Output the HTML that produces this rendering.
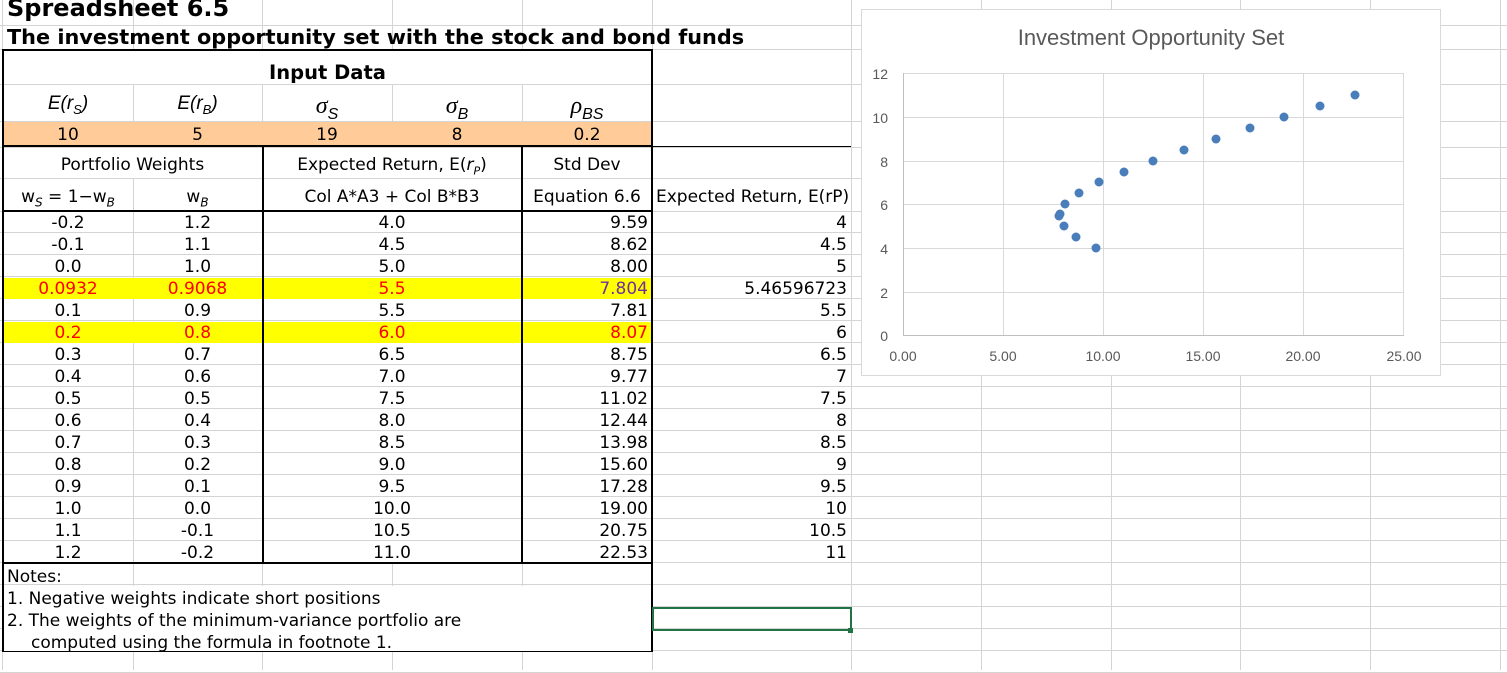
<!DOCTYPE html>
<html><head><meta charset="utf-8">
<style>
*{margin:0;padding:0;box-sizing:border-box}
body{width:1507px;height:670px;overflow:hidden;background:#fff;position:relative;font-family:"DejaVu Sans","Liberation Sans",sans-serif;font-size:17px;color:#000}
.v{position:absolute;width:1px;background:#d4d4d4}
.h{position:absolute;left:0;width:1507px;height:1px;background:#d4d4d4}
.c{position:absolute;white-space:nowrap;text-align:center;height:22px;line-height:22px}
.r{text-align:right}
.l{text-align:left}
.bk{position:absolute;background:#000}
.red{color:#f00}
</style></head><body>
<!-- grid -->
<div class="v" style="left:2px;top:0;height:670px"></div><div class="v" style="left:133px;top:0;height:670px"></div><div class="v" style="left:262px;top:0;height:670px"></div>
<div class="v" style="left:392px;top:0;height:147px"></div><div class="v" style="left:392px;top:563px;height:107px"></div>
<div class="v" style="left:522px;top:0;height:670px"></div><div class="v" style="left:652px;top:0;height:670px"></div><div class="v" style="left:851px;top:0;height:670px"></div><div class="v" style="left:981px;top:0;height:670px"></div><div class="v" style="left:1111px;top:0;height:670px"></div><div class="v" style="left:1240px;top:0;height:670px"></div><div class="v" style="left:1370px;top:0;height:670px"></div><div class="v" style="left:1500px;top:0;height:670px"></div>
<div class="h" style="top:25px"></div><div class="h" style="top:49px"></div><div class="h" style="top:84px"></div><div class="h" style="top:121px"></div><div class="h" style="top:147px"></div><div class="h" style="top:178px"></div><div class="h" style="top:211px"></div>
<div style="position:absolute;left:0;top:211px;width:1507px;height:462px;background:repeating-linear-gradient(to bottom,transparent 0,transparent 21px,#d4d4d4 21px,#d4d4d4 22px)"></div>

<!-- fills -->
<div style="position:absolute;left:3px;top:122px;width:649px;height:25px;background:#ffcc99"></div>
<div style="position:absolute;left:3px;top:278px;width:649px;height:21px;background:#ffff00"></div>
<div style="position:absolute;left:3px;top:322px;width:649px;height:21px;background:#ffff00"></div>

<div style="position:absolute;left:3px;top:50px;width:649px;height:34px;background:#fff"></div>
<div style="position:absolute;left:3px;top:148px;width:259px;height:30px;background:#fff"></div>
<div style="position:absolute;left:263px;top:148px;width:259px;height:30px;background:#fff"></div>
<div style="position:absolute;left:263px;top:179px;width:259px;height:32px;background:#fff"></div>

<!-- black borders -->
<div class="bk" style="left:2px;top:49px;width:651px;height:2px"></div>
<div class="bk" style="left:2px;top:49px;width:2px;height:603px"></div>
<div class="bk" style="left:651px;top:49px;width:2px;height:603px"></div>
<div class="bk" style="left:2px;top:145px;width:651px;height:2px"></div>
<div class="bk" style="left:652px;top:146px;width:199px;height:1px"></div>
<div class="bk" style="left:2px;top:210px;width:651px;height:2px"></div>
<div class="bk" style="left:2px;top:562px;width:651px;height:2px"></div>
<div class="bk" style="left:2px;top:651px;width:651px;height:1px"></div>
<div class="bk" style="left:262px;top:146px;width:2px;height:417px"></div>
<div class="bk" style="left:521px;top:146px;width:2px;height:417px"></div>

<!-- titles -->
<div class="c l" style="left:7px;top:-6px;height:28px;line-height:28px;font-size:24px;font-weight:bold">Spreadsheet 6.5</div>
<div class="c l" style="left:7px;top:25px;height:24px;line-height:24px;font-size:20.8px;font-weight:bold">The investment opportunity set with the stock and bond funds</div>
<div class="c" style="left:3px;width:649px;top:62px;font-size:19.5px;font-weight:bold;">Input Data</div>
<div class="c" style="left:3px;width:130px;top:93px;font-style:italic;font-family:'Liberation Sans',sans-serif;font-size:19px">E(r<sub style="font-size:13px">S</sub>)</div>
<div class="c" style="left:133px;width:129px;top:93px;font-style:italic;font-family:'Liberation Sans',sans-serif;font-size:19px">E(r<sub style="font-size:13px">B</sub>)</div>
<div class="c" style="left:262px;width:130px;top:95px;font-style:italic;font-family:'Liberation Serif',serif;font-size:24px">σ<sub style="font-size:16px;font-family:'Liberation Sans'">S</sub></div>
<div class="c" style="left:392px;width:130px;top:95px;font-style:italic;font-family:'Liberation Serif',serif;font-size:24px">σ<sub style="font-size:16px;font-family:'Liberation Sans'">B</sub></div>
<div class="c" style="left:522px;width:130px;top:95px;font-style:italic;font-family:'Liberation Serif',serif;font-size:24px">ρ<sub style="font-size:16px;font-family:'Liberation Sans'">BS</sub></div>
<div class="c" style="left:3px;width:130px;top:124px">10</div>
<div class="c" style="left:133px;width:129px;top:124px">5</div>
<div class="c" style="left:262px;width:130px;top:124px">19</div>
<div class="c" style="left:392px;width:130px;top:124px">8</div>
<div class="c" style="left:522px;width:130px;top:124px">0.2</div>
<div class="c" style="left:3px;width:259px;top:154px">Portfolio Weights</div>
<div class="c" style="left:262px;width:260px;top:154px">Expected Return, E(<i>r<sub style="font-size:11px">P</sub></i>)</div>
<div class="c" style="left:522px;width:130px;top:154px">Std Dev</div>
<div class="c" style="left:3px;width:130px;top:186px">w<sub style="font-size:12px"><i>S</i></sub> = 1−w<sub style="font-size:12px"><i>B</i></sub></div>
<div class="c" style="left:133px;width:129px;top:186px">w<sub style="font-size:12px"><i>B</i></sub></div>
<div class="c" style="left:262px;width:260px;top:186px">Col A*A3 + Col B*B3</div>
<div class="c" style="left:522px;width:130px;top:186px">Equation 6.6</div>
<div class="c l" style="left:656px;top:186px">Expected Return, E(rP)</div>

<!-- data rows -->
<div style="position:absolute;left:0;top:212px">
<div class="c" style="left:3px;width:130px;top:0">-0.2</div><div class="c" style="left:133px;width:129px;top:0">1.2</div><div class="c" style="left:262px;width:260px;top:0">4.0</div><div class="c r" style="left:522px;width:126px;top:0">9.59</div><div class="c r" style="left:652px;width:195px;top:0">4</div>
<div class="c" style="left:3px;width:130px;top:22px">-0.1</div><div class="c" style="left:133px;width:129px;top:22px">1.1</div><div class="c" style="left:262px;width:260px;top:22px">4.5</div><div class="c r" style="left:522px;width:126px;top:22px">8.62</div><div class="c r" style="left:652px;width:195px;top:22px">4.5</div>
<div class="c" style="left:3px;width:130px;top:44px">0.0</div><div class="c" style="left:133px;width:129px;top:44px">1.0</div><div class="c" style="left:262px;width:260px;top:44px">5.0</div><div class="c r" style="left:522px;width:126px;top:44px">8.00</div><div class="c r" style="left:652px;width:195px;top:44px">5</div>
<div class="c red" style="left:3px;width:130px;top:66px">0.0932</div><div class="c red" style="left:133px;width:129px;top:66px">0.9068</div><div class="c red" style="left:262px;width:260px;top:66px">5.5</div><div class="c r" style="left:522px;width:126px;top:66px;color:#7030a0">7.804</div><div class="c r" style="left:652px;width:195px;top:66px">5.46596723</div>
<div class="c" style="left:3px;width:130px;top:88px">0.1</div><div class="c" style="left:133px;width:129px;top:88px">0.9</div><div class="c" style="left:262px;width:260px;top:88px">5.5</div><div class="c r" style="left:522px;width:126px;top:88px">7.81</div><div class="c r" style="left:652px;width:195px;top:88px">5.5</div>
<div class="c red" style="left:3px;width:130px;top:110px">0.2</div><div class="c red" style="left:133px;width:129px;top:110px">0.8</div><div class="c red" style="left:262px;width:260px;top:110px">6.0</div><div class="c r red" style="left:522px;width:126px;top:110px">8.07</div><div class="c r" style="left:652px;width:195px;top:110px">6</div>
<div class="c" style="left:3px;width:130px;top:132px">0.3</div><div class="c" style="left:133px;width:129px;top:132px">0.7</div><div class="c" style="left:262px;width:260px;top:132px">6.5</div><div class="c r" style="left:522px;width:126px;top:132px">8.75</div><div class="c r" style="left:652px;width:195px;top:132px">6.5</div>
<div class="c" style="left:3px;width:130px;top:154px">0.4</div><div class="c" style="left:133px;width:129px;top:154px">0.6</div><div class="c" style="left:262px;width:260px;top:154px">7.0</div><div class="c r" style="left:522px;width:126px;top:154px">9.77</div><div class="c r" style="left:652px;width:195px;top:154px">7</div>
<div class="c" style="left:3px;width:130px;top:176px">0.5</div><div class="c" style="left:133px;width:129px;top:176px">0.5</div><div class="c" style="left:262px;width:260px;top:176px">7.5</div><div class="c r" style="left:522px;width:126px;top:176px">11.02</div><div class="c r" style="left:652px;width:195px;top:176px">7.5</div>
<div class="c" style="left:3px;width:130px;top:198px">0.6</div><div class="c" style="left:133px;width:129px;top:198px">0.4</div><div class="c" style="left:262px;width:260px;top:198px">8.0</div><div class="c r" style="left:522px;width:126px;top:198px">12.44</div><div class="c r" style="left:652px;width:195px;top:198px">8</div>
<div class="c" style="left:3px;width:130px;top:220px">0.7</div><div class="c" style="left:133px;width:129px;top:220px">0.3</div><div class="c" style="left:262px;width:260px;top:220px">8.5</div><div class="c r" style="left:522px;width:126px;top:220px">13.98</div><div class="c r" style="left:652px;width:195px;top:220px">8.5</div>
<div class="c" style="left:3px;width:130px;top:242px">0.8</div><div class="c" style="left:133px;width:129px;top:242px">0.2</div><div class="c" style="left:262px;width:260px;top:242px">9.0</div><div class="c r" style="left:522px;width:126px;top:242px">15.60</div><div class="c r" style="left:652px;width:195px;top:242px">9</div>
<div class="c" style="left:3px;width:130px;top:264px">0.9</div><div class="c" style="left:133px;width:129px;top:264px">0.1</div><div class="c" style="left:262px;width:260px;top:264px">9.5</div><div class="c r" style="left:522px;width:126px;top:264px">17.28</div><div class="c r" style="left:652px;width:195px;top:264px">9.5</div>
<div class="c" style="left:3px;width:130px;top:286px">1.0</div><div class="c" style="left:133px;width:129px;top:286px">0.0</div><div class="c" style="left:262px;width:260px;top:286px">10.0</div><div class="c r" style="left:522px;width:126px;top:286px">19.00</div><div class="c r" style="left:652px;width:195px;top:286px">10</div>
<div class="c" style="left:3px;width:130px;top:308px">1.1</div><div class="c" style="left:133px;width:129px;top:308px">-0.1</div><div class="c" style="left:262px;width:260px;top:308px">10.5</div><div class="c r" style="left:522px;width:126px;top:308px">20.75</div><div class="c r" style="left:652px;width:195px;top:308px">10.5</div>
<div class="c" style="left:3px;width:130px;top:330px">1.2</div><div class="c" style="left:133px;width:129px;top:330px">-0.2</div><div class="c" style="left:262px;width:260px;top:330px">11.0</div><div class="c r" style="left:522px;width:126px;top:330px">22.53</div><div class="c r" style="left:652px;width:195px;top:330px">11</div>
</div>

<!-- notes -->
<div style="position:absolute;left:4px;top:586px;width:647px;height:65px;background:#fff"></div>
<div class="c l" style="left:7px;top:566px">Notes:</div>
<div class="c l" style="left:7px;top:588px">1. Negative weights indicate short positions</div>
<div class="c l" style="left:7px;top:610px">2. The weights of the minimum-variance portfolio are</div>
<div class="c l" style="left:31px;top:632px">computed using the formula in footnote 1.</div>

<!-- selected cell -->
<div style="position:absolute;left:652px;top:607px;width:200px;height:24px;border:2px solid #217346"></div>
<div style="position:absolute;left:848px;top:628px;width:5px;height:5px;background:#217346"></div>

<!-- chart -->
<svg style="position:absolute;left:861px;top:9px" width="581" height="368" viewBox="861 9 581 368" font-family="Liberation Sans, sans-serif">
<rect x="861.5" y="9.5" width="579" height="366" fill="#fff" stroke="#d9d9d9"/>
<text x="1151" y="45" text-anchor="middle" font-size="22" fill="#595959">Investment Opportunity Set</text>
<g stroke="#d9d9d9" stroke-width="1">
<line x1="903" y1="73.5" x2="1404" y2="73.5"/><line x1="903" y1="117.5" x2="1404" y2="117.5"/><line x1="903" y1="161.5" x2="1404" y2="161.5"/><line x1="903" y1="204.5" x2="1404" y2="204.5"/><line x1="903" y1="248.5" x2="1404" y2="248.5"/><line x1="903" y1="292.5" x2="1404" y2="292.5"/>
<line x1="1003.5" y1="73" x2="1003.5" y2="335"/><line x1="1103.5" y1="73" x2="1103.5" y2="335"/><line x1="1203.5" y1="73" x2="1203.5" y2="335"/><line x1="1303.5" y1="73" x2="1303.5" y2="335"/><line x1="1403.5" y1="73" x2="1403.5" y2="335"/>
</g>
<line x1="903.5" y1="73" x2="903.5" y2="336" stroke="#bfbfbf"/>
<line x1="903" y1="335.5" x2="1404" y2="335.5" stroke="#bfbfbf"/>
<g font-size="14" fill="#595959" text-anchor="end">
<text x="888" y="79">12</text><text x="888" y="123">10</text><text x="888" y="167">8</text><text x="888" y="210">6</text><text x="888" y="254">4</text><text x="888" y="298">2</text><text x="888" y="341">0</text>
</g>
<g font-size="14" fill="#595959" text-anchor="middle">
<text x="903" y="361">0.00</text><text x="1003" y="361">5.00</text><text x="1103" y="361">10.00</text><text x="1203" y="361">15.00</text><text x="1303" y="361">20.00</text><text x="1404" y="361">25.00</text>
</g>
<g fill="#4a7ebb">
<circle cx="1096" cy="248" r="4.5"/><circle cx="1076" cy="237" r="4.5"/><circle cx="1064" cy="226" r="4.5"/><circle cx="1059" cy="216" r="4.5"/><circle cx="1060" cy="214" r="4.5"/><circle cx="1065" cy="204" r="4.5"/><circle cx="1079" cy="193" r="4.5"/><circle cx="1099" cy="182" r="4.5"/><circle cx="1124" cy="172" r="4.5"/><circle cx="1153" cy="161" r="4.5"/><circle cx="1184" cy="150" r="4.5"/><circle cx="1216" cy="139" r="4.5"/><circle cx="1250" cy="128" r="4.5"/><circle cx="1284" cy="117" r="4.5"/><circle cx="1320" cy="106" r="4.5"/><circle cx="1355" cy="95" r="4.5"/>
</g>
</svg>
</body></html>
